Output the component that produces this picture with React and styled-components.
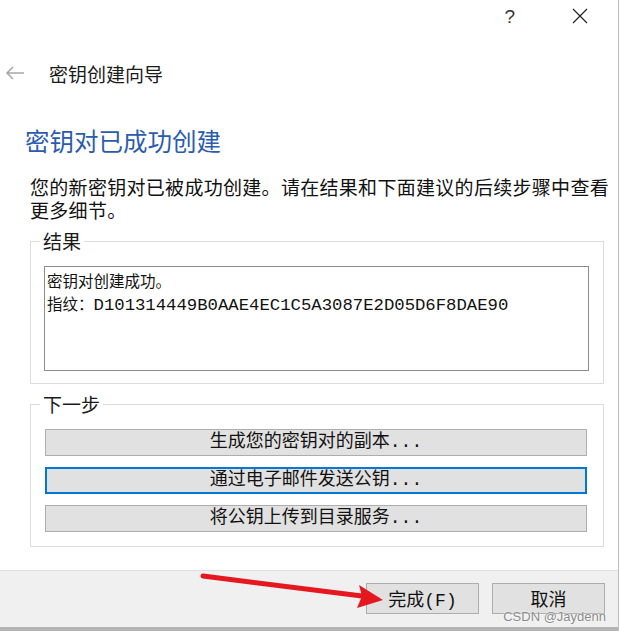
import styled, { createGlobalStyle } from 'styled-components'

const GlobalStyle = createGlobalStyle`
   html, body {
      margin: 0;
      padding: 0;
      background: #fff;
   }
   body {
      font-family: "Noto Sans CJK SC", "Noto Sans", sans-serif;
      color: #000;
   }
`

const Window = styled.div`
   position: relative;
   width: 619px;
   height: 631px;
   box-sizing: border-box;
   border-right: 1px solid #bdbdbd;
   display: flex;
   flex-direction: column;
   overflow: hidden;
   background: #fff;
`

const TitleBar = styled.div`
   height: 32px;
   display: flex;
   justify-content: flex-end;
   align-items: center;
   padding-right: 30px;
`

const Help = styled.span`
   font-family: "Liberation Sans", sans-serif;
   font-size: 19px;
   color: #333;
   margin-right: 57px;
   line-height: 1;
`

const Header = styled.div`
   height: 30px;
   margin-top: 26px;
   padding-left: 5px;
   display: flex;
   align-items: center;
`

const HeaderTitle = styled.span`
   margin-left: 24px;
   font-size: 19px;
   color: #1b1b1b;
`

const Heading = styled.h1`
   margin: 37px 0 0 25px;
   font-size: 24.5px;
   line-height: 32px;
   font-weight: 400;
   color: #2b5caf;
`

const Description = styled.p`
   margin: 18px 0 0 30px;
   font-size: 19px;
   line-height: 23px;
   letter-spacing: 0.3px;
   color: #111;
`

const Group = styled.fieldset`
   margin: ${(props) => props.$mt || '9px'} 0 0 30px;
   width: 574px;
   box-sizing: border-box;
   min-width: 0;
   border: 1px solid #dcdcdc;
   padding: 14px 14px ${(props) => props.$pb || '12px'} 13px;
`

const Legend = styled.legend`
   margin-left: -4px;
   padding: 0 3px;
   font-size: 19px;
   line-height: 22px;
   color: #1a1a1a;
`

const ResultBox = styled.div`
   height: 105px;
   box-sizing: border-box;
   border: 1px solid #8c8c8c;
   padding: 3px 2px;
   font-family: "Liberation Mono", "Noto Sans CJK SC", monospace;
   font-size: 17.3px;
   line-height: 21px;
   color: #111;
`

const Cjk = styled.span`
   font-family: "Noto Sans CJK SC", sans-serif;
   font-size: 15.5px;
   line-height: 21px;
`

const Actions = styled.div`
   display: flex;
   flex-direction: column;
   gap: 11px;
   margin: 0 2px 0 1px;
`

const ActionButton = styled.button`
   height: 27px;
   box-sizing: border-box;
   padding: 0;
   background: #e1e1e1;
   border: 1px solid ${(props) => (props.$focused ? '#0078d7' : '#adadad')};
   box-shadow: ${(props) => (props.$focused ? 'inset 0 0 0 1px #0078d7' : 'none')};
   font-family: "Liberation Mono", "Noto Sans CJK SC", monospace;
   font-size: 18px;
   line-height: 25px;
   color: #111;
`

const Footer = styled.div`
   margin-top: auto;
   height: 57px;
   box-sizing: border-box;
   border-top: 1px solid #dfdfdf;
   background: #f0f0f0;
   display: flex;
   justify-content: flex-end;
   align-items: flex-start;
   gap: 13px;
   padding: 12px 13px 0 0;
`

const DialogButton = styled.button`
   width: 113px;
   height: 31px;
   box-sizing: border-box;
   padding: 0 0 2px;
   background: #e1e1e1;
   border: 1px solid #adadad;
   font-family: "Liberation Mono", "Noto Sans CJK SC", monospace;
   font-size: 18px;
   color: #111;
`

const BottomStrip = styled.div`
   height: 4px;
   background: #b4b4b4;
`

const Watermark = styled.span`
   position: absolute;
   right: 12px;
   bottom: 7px;
   font-family: "Liberation Sans", sans-serif;
   font-size: 13px;
   line-height: 15px;
   color: #8a8a8a;
   text-shadow: 0 0 2px #fff, 0 0 1px #fff;
   pointer-events: none;
`

const Overlay = styled.svg`
   position: absolute;
   left: 0;
   top: 0;
   pointer-events: none;
`

export default function App() {
   return (
      <>
         <GlobalStyle />
         <Window>
            <TitleBar>
               <Help>?</Help>
               <svg width="16" height="16" viewBox="0 0 16 16">
                  <path d="M1 1 L15 15 M15 1 L1 15" stroke="#222" strokeWidth="1.2" fill="none" />
               </svg>
            </TitleBar>
            <Header>
               <svg width="20" height="14" viewBox="0 0 20 14">
                  <path d="M19 7 H2 M8 1 L2 7 L8 13" stroke="#a8a8a8" strokeWidth="1.6" fill="none" />
               </svg>
               <HeaderTitle>密钥创建向导</HeaderTitle>
            </Header>
            <Heading>密钥对已成功创建</Heading>
            <Description>
               您的新密钥对已被成功创建。请在结果和下面建议的后续步骤中查看
               <br />
               更多细节。
            </Description>
            <Group>
               <Legend>结果</Legend>
               <ResultBox>
                  <Cjk>密钥对创建成功。</Cjk>
                  <br />
                  <Cjk>指纹：</Cjk>D101314449B0AAE4EC1C5A3087E2D05D6F8DAE90
               </ResultBox>
            </Group>
            <Group $mt="9px" $pb="14px">
               <Legend>下一步</Legend>
               <Actions>
                  <ActionButton>生成您的密钥对的副本...</ActionButton>
                  <ActionButton $focused>通过电子邮件发送公钥...</ActionButton>
                  <ActionButton>将公钥上传到目录服务...</ActionButton>
               </Actions>
            </Group>
            <Footer>
               <DialogButton>完成(F)</DialogButton>
               <DialogButton>取消</DialogButton>
            </Footer>
            <BottomStrip />
            <Watermark>CSDN @Jaydenn</Watermark>
            <Overlay width="619" height="631" viewBox="0 0 619 631">
               <line x1="203" y1="576" x2="362" y2="596" stroke="#e5171f" strokeWidth="5" strokeLinecap="round" />
               <polygon points="383,600 359,585 362,596 357,608" fill="#e5171f" />
            </Overlay>
         </Window>
      </>
   )
}
